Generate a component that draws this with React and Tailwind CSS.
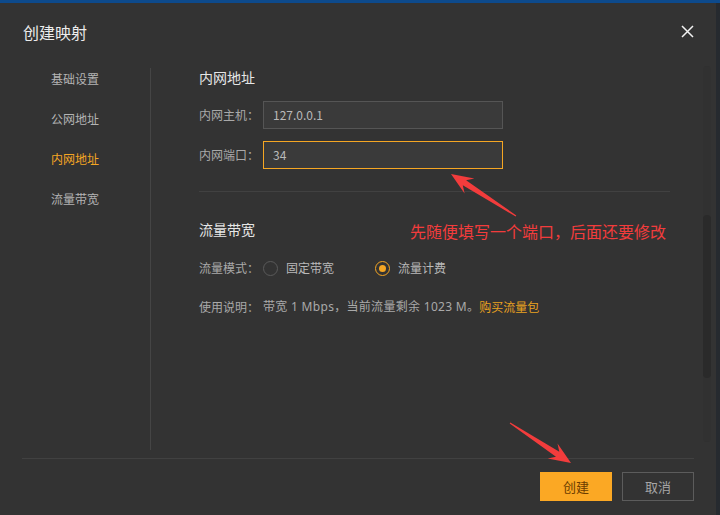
import React from "react";

const font = { fontFamily: '"Noto Sans CJK SC", "Noto Sans", sans-serif' };

function arrowPoints(x1, y1, x2, y2) {
  const dx = x2 - x1;
  const dy = y2 - y1;
  const len = Math.hypot(dx, dy);
  const ux = dx / len;
  const uy = dy / len;
  const nx = -uy;
  const ny = ux;
  const headLen = 22;
  const headW = 9;
  const neckW = 3;
  const bx = x2 - ux * headLen;
  const by = y2 - uy * headLen;
  const nbx = x2 - ux * (headLen - 6);
  const nby = y2 - uy * (headLen - 6);
  const pts = [
    [x2, y2],
    [bx + nx * headW, by + ny * headW],
    [nbx + nx * neckW, nby + ny * neckW],
    [x1 + nx * 0.6, y1 + ny * 0.6],
    [x1 - nx * 0.6, y1 - ny * 0.6],
    [nbx - nx * neckW, nby - ny * neckW],
    [bx - nx * headW, by - ny * headW],
  ];
  return pts.map((p) => p.map((v) => v.toFixed(1)).join(",")).join(" ");
}

function Radio({ checked }) {
  return checked ? (
    <span className="w-[15px] h-[15px] shrink-0 rounded-full border-[1.5px] border-[#f5a623] flex items-center justify-center">
      <span className="w-[7px] h-[7px] rounded-full bg-[#f5a623]" />
    </span>
  ) : (
    <span className="w-[15px] h-[15px] shrink-0 rounded-full border-[1.5px] border-[#5a5a5a]" />
  );
}

export default function App() {
  return (
    <div
      className="relative w-[720px] h-[515px] bg-[#2b2e33] flex flex-col overflow-hidden"
      style={font}
    >
      <div className="h-[3px] bg-[#0d4a8c]" />
      <div className="flex-1 flex">
        <div className="flex-1 bg-[#333333] flex flex-col">
          {/* header */}
          <div className="h-[57px] flex items-center justify-between pl-[23px] pr-[22px]">
            <span className="text-[16px] text-[#ececec] leading-none">创建映射</span>
            <svg width="13" height="13" viewBox="0 0 13 13">
              <path d="M1 1 L12 12 M12 1 L1 12" stroke="#f2f2f2" strokeWidth="1.5" />
            </svg>
          </div>
          {/* body */}
          <div className="flex-1 flex py-[8px]">
            <div className="w-[151px] shrink-0 border-r border-[#454545] pl-[51px] pt-[2px] flex flex-col gap-[22px] text-[12px]">
              <div className="h-[18px] leading-[18px] text-[#b4b4b4]">基础设置</div>
              <div className="h-[18px] leading-[18px] text-[#b4b4b4]">公网地址</div>
              <div className="h-[18px] leading-[18px] text-[#f5a623]">内网地址</div>
              <div className="h-[18px] leading-[18px] text-[#b4b4b4]">流量带宽</div>
            </div>
            <div className="flex-1 pl-[48px] pr-[33px] text-[12px]">
              <div className="h-[18px] leading-[18px] text-[14px] text-[#e6e6e6]">内网地址</div>
              <div className="mt-[15px] flex flex-col gap-[12px]">
                <div className="flex items-center h-[28px]">
                  <span className="w-[64px] shrink-0 whitespace-nowrap text-[#a9a9a9]">内网主机：</span>
                  <div className="w-[240px] h-[28px] bg-[#3a3a3a] border border-[#555555] pl-[9px] flex items-center text-[#b9b9b9]">
                    127.0.0.1
                  </div>
                </div>
                <div className="flex items-center h-[28px]">
                  <span className="w-[64px] shrink-0 whitespace-nowrap text-[#a9a9a9]">内网端口：</span>
                  <div className="w-[240px] h-[28px] bg-[#3a3a3a] border border-[#f5a623] pl-[9px] flex items-center text-[#b9b9b9]">
                    34
                  </div>
                </div>
              </div>
              <div className="mt-[22px] h-px bg-[#414141]" />
              <div className="mt-[28px] h-[18px] leading-[18px] text-[14px] text-[#e6e6e6]">流量带宽</div>
              <div className="mt-[21px] h-[18px] flex items-center whitespace-nowrap">
                <span className="w-[64px] shrink-0 text-[#a9a9a9]">流量模式：</span>
                <Radio checked={false} />
                <span className="ml-[8px] text-[#b9b9b9]">固定带宽</span>
                <span className="ml-[41px]">
                  <Radio checked />
                </span>
                <span className="ml-[8px] text-[#b9b9b9]">流量计费</span>
              </div>
              <div className="mt-[21px] h-[18px] flex items-center whitespace-nowrap">
                <span className="w-[64px] shrink-0 text-[#a9a9a9]">使用说明：</span>
                <span className="text-[#a9a9a9] tracking-[0.3px] font-['Noto_Sans','Noto_Sans_CJK_SC',sans-serif]">
                  带宽 1 Mbps，当前流量剩余 1023 M。
                </span>
                <span className="text-[#e9a21f]">购买流量包</span>
              </div>
            </div>
            <div className="w-[8px] shrink-0 mr-[5px] bg-[#313131] rounded-[4px] mt-[-2px] mb-[8px] pt-[149px] pb-[64px] flex flex-col">
              <div className="flex-1 bg-[#2a2a2a] rounded-[4px]" />
            </div>
          </div>
          {/* footer */}
          <div className="mx-[22px] border-t border-[#414141] h-[57px] pt-[13px] flex justify-end gap-[10px]">
            <button className="w-[72px] h-[29px] bg-[#fba824] text-[13px] text-[#6b3d00]">创建</button>
            <button className="w-[72px] h-[29px] border border-[#5c5c5c] text-[13px] text-[#a6a6a6]">取消</button>
          </div>
        </div>
        <div className="w-[4px] bg-[#262a2f]" />
      </div>

      {/* annotations */}
      <div className="absolute left-[410px] top-[220px] text-[16px] leading-[22px] text-[#f23c3c] whitespace-nowrap">
        先随便填写一个端口，后面还要修改
      </div>
      <svg className="absolute inset-0 pointer-events-none" width="720" height="515">
        <polygon points={arrowPoints(516, 216, 451, 174)} fill="#f23c3c" />
        <polygon points={arrowPoints(510, 423, 571, 463)} fill="#f23c3c" />
      </svg>
    </div>
  );
}
